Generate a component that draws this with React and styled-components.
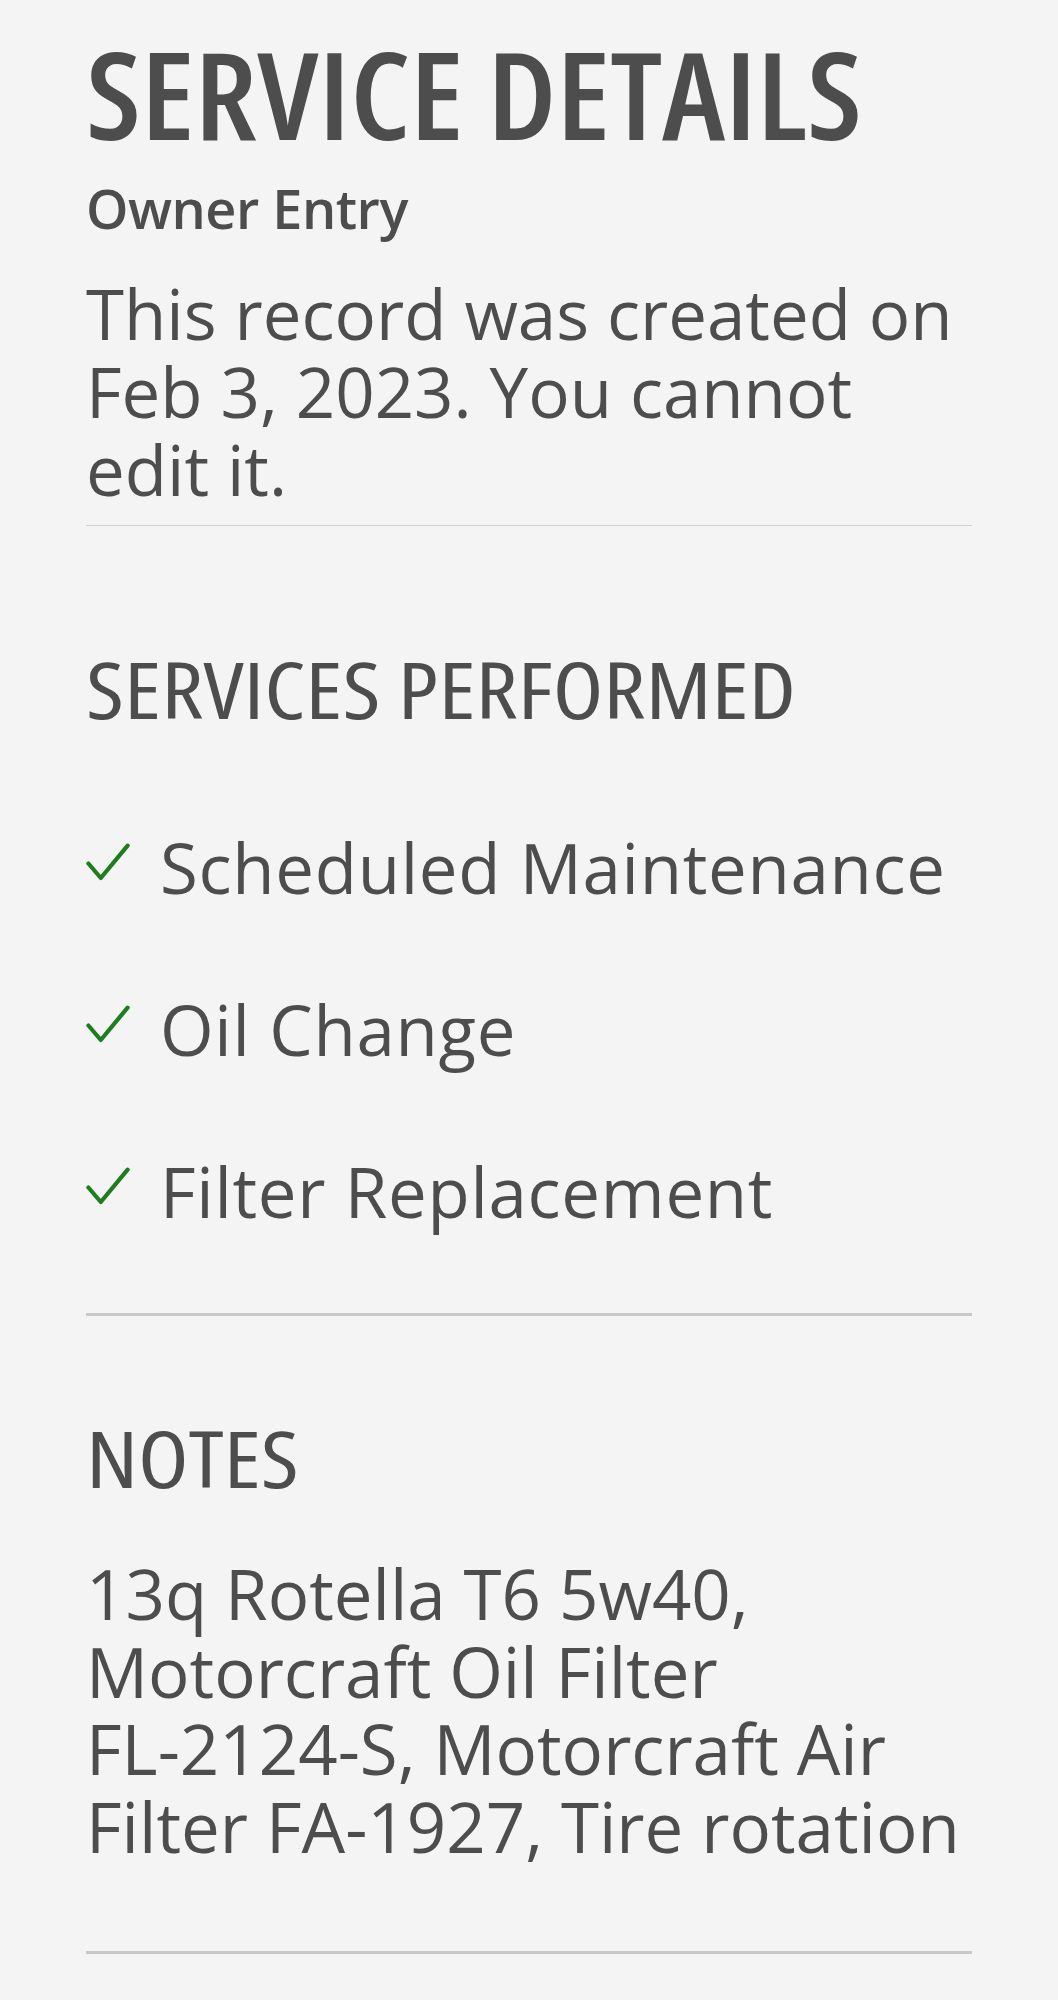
import React from "react";
import styled, { createGlobalStyle } from "styled-components";

const Global = createGlobalStyle`
  html, body {
    margin: 0;
    padding: 0;
    background: #f4f4f4;
  }
  body {
    font-family: "Open Sans", "Noto Sans", sans-serif;
    color: #4d4d4d;
  }
`;

const Page = styled.main`
  background: #f4f4f4;
  padding: 32px 86px 40px;
  min-height: 2000px;
  box-sizing: border-box;
  overflow: hidden;
`;

const Title = styled.h1`
  margin: 0;
  width: max-content;
  font-family: "Open Sans", sans-serif;
  font-stretch: 75%;
  font-weight: 600;
  font-size: 122px;
  line-height: 122px;
  letter-spacing: 0;
  color: #4d4d4d;
  white-space: nowrap;
  transform: scaleX(1.062);
  transform-origin: left center;
`;

const Subtitle = styled.div`
  margin-top: 26px;
  font-weight: 600;
  font-size: 54px;
  line-height: 56px;
  letter-spacing: -0.5px;
`;

const Paragraph = styled.p`
  margin: ${(p) => p.$mt || 0}px 0 0;
  font-size: 69px;
  line-height: ${(p) => p.$lh || 78}px;
  font-weight: 400;
  letter-spacing: 0;
  white-space: ${(p) => (p.$preLine ? "pre-line" : "normal")};
`;

const Divider = styled.hr`
  margin: ${(p) => p.$mt}px 0 0;
  border: none;
  height: ${(p) => p.$h || 3}px;
  background: ${(p) => p.$color || "#c9c9c9"};
`;

const SectionTitle = styled.h2`
  margin: ${(p) => p.$mt}px 0 0;
  width: max-content;
  font-family: "Open Sans", sans-serif;
  font-stretch: 75%;
  font-weight: 400;
  font-size: 78px;
  line-height: 78px;
  letter-spacing: 0;
  color: #4d4d4d;
  white-space: nowrap;
  transform: scaleX(1.19);
  transform-origin: left center;
`;

const List = styled.ul`
  list-style: none;
  margin: 100px 0 0;
  padding: 0;
  display: flex;
  flex-direction: column;
  gap: 84px;
`;

const Item = styled.li`
  display: flex;
  align-items: flex-start;
  gap: 30px;
  font-size: 69px;
  line-height: 78px;
  letter-spacing: 0.7px;
`;

const CheckIcon = styled.svg`
  flex: none;
  width: 44px;
  height: 38px;
  margin-top: 15px;
`;

const Check = () => (
  <CheckIcon viewBox="0 0 44 38" aria-hidden="true">
    <polyline
      points="2.4,20.5 14.8,35 41.6,2.6"
      fill="none"
      stroke="#1e7e1e"
      strokeWidth="4.2"
      strokeLinecap="round"
      strokeLinejoin="round"
    />
  </CheckIcon>
);

const services = ["Scheduled Maintenance", "Oil Change", "Filter Replacement"];

const notes = [
  "13q Rotella T6 5w40,",
  "Motorcraft Oil Filter",
  "FL-2124-S, Motorcraft Air",
  "Filter FA-1927, Tire rotation",
].join("\n");

export default function App() {
  return (
    <>
      <Global />
      <Page>
        <Title>SERVICE DETAILS</Title>
        <Subtitle>Owner Entry</Subtitle>
        <Paragraph $mt={38}>
          This record was created on Feb 3, 2023. You cannot edit it.
        </Paragraph>
        <Divider $mt={17} $h={1} $color="#d0d0d0" />

        <SectionTitle $mt={124}>SERVICES PERFORMED</SectionTitle>
        <List>
          {services.map((s) => (
            <Item key={s}>
              <Check />
              <span>{s}</span>
            </Item>
          ))}
        </List>
        <Divider $mt={83} />

        <SectionTitle $mt={103}>NOTES</SectionTitle>
        <Paragraph $mt={58} $lh={77.5} $preLine>
          {notes}
        </Paragraph>
        <Divider $mt={86} />
      </Page>
    </>
  );
}
